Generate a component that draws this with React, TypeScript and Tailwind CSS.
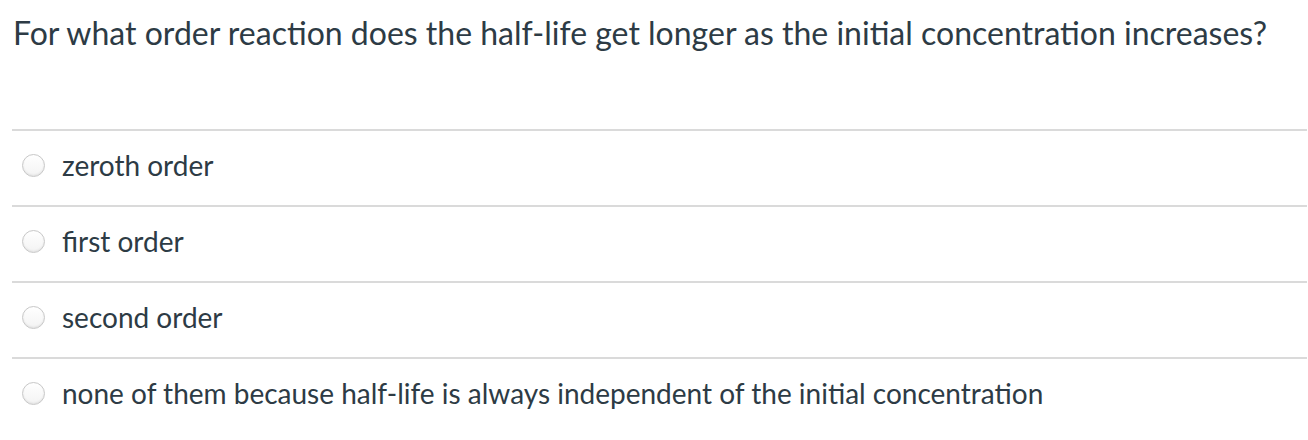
const options = [
  'zeroth order',
  'first order',
  'second order',
  'none of them because half-life is always independent of the initial concentration',
];

function Radio() {
  return (
    <span className="block h-[23px] w-[23px] shrink-0 rounded-full border border-[#c8c8c8] bg-[linear-gradient(180deg,#ffffff,#f3f3f3)] shadow-[inset_0_-1px_2px_rgba(0,0,0,0.08)]" />
  );
}

export default function App() {
  return (
    <div className="h-[440px] w-[1308px] bg-white font-['Lato','Liberation_Sans',sans-serif] text-[#2d3b45]">
      <div className="pl-[13px] pt-[11px]">
        <p className="h-[118px] text-[32px] leading-[44px]">
          For what order reaction does the half-life get longer as the initial concentration increases?
        </p>
      </div>
      <div className="ml-[12px] mr-[1px]">
        {options.map((o) => (
          <div key={o} className="flex h-[76px] items-center gap-[17px] border-t-2 border-[#dadada] pb-[6px] pl-[10px]">
            <Radio />
            <span className="text-[28px] leading-[36px]">{o}</span>
          </div>
        ))}
      </div>
    </div>
  );
}
